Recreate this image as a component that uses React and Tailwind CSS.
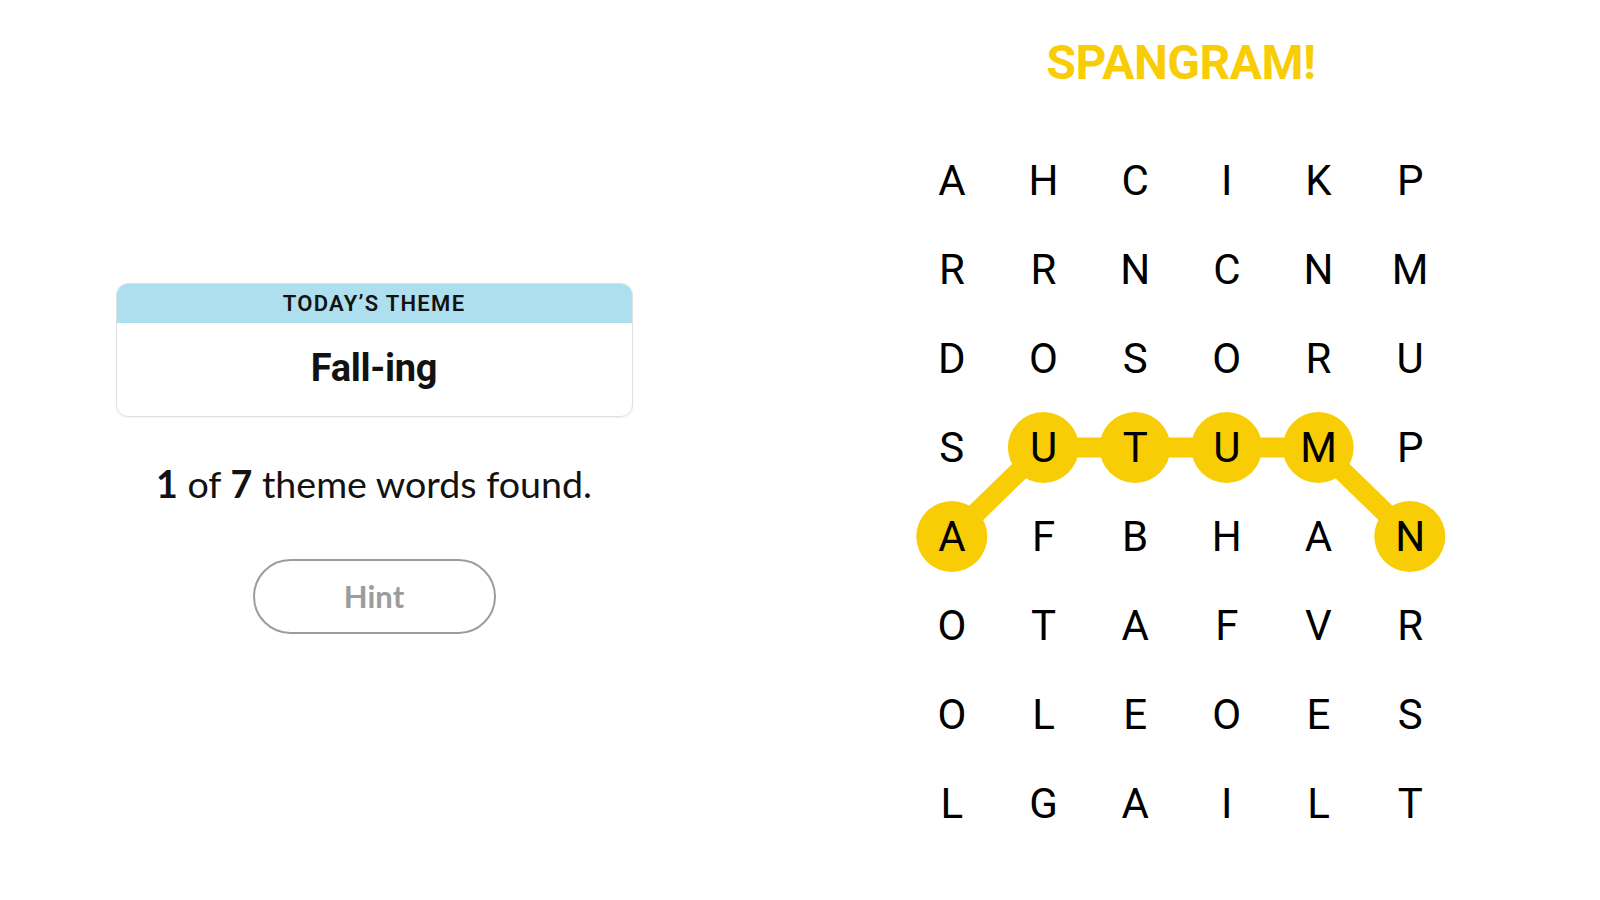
import React from "react";

const ROWS = [
  "AHCIKP",
  "RRNCNM",
  "DOSORU",
  "SUTUMP",
  "AFBHAN",
  "OTAFVR",
  "OLEOES",
  "LGAILT",
];

const CW = 91.6;
const CH = 89;
const PATH = [
  [4, 0],
  [3, 1],
  [3, 2],
  [3, 3],
  [3, 4],
  [4, 5],
];
const YELLOW = "#f8cd05";

function Board() {
  const pts = PATH.map(([r, c]) => [c * CW + CW / 2, r * CH + CH / 2]);
  return (
    <div className="relative w-[550px] h-[712px]">
      <svg
        className="absolute inset-0"
        width="550"
        height="712"
        viewBox="0 0 550 712"
      >
        <polyline
          points={pts.map((p) => p.join(",")).join(" ")}
          fill="none"
          stroke={YELLOW}
          strokeWidth="20"
          strokeLinejoin="round"
          strokeLinecap="round"
        />
        {pts.map(([x, y], i) => (
          <circle key={i} cx={x} cy={y} r="35.5" fill={YELLOW} />
        ))}
      </svg>
      <div className="relative grid grid-cols-6 grid-rows-8 w-full h-full">
        {ROWS.flatMap((row, r) =>
          row.split("").map((ch, c) => (
            <div
              key={r + "-" + c}
              className="flex items-center justify-center text-[42px] leading-none text-black font-['Roboto',sans-serif]"
            >
              {ch}
            </div>
          ))
        )}
      </div>
    </div>
  );
}

export default function App() {
  return (
    <div className="w-[1600px] h-[900px] bg-white flex overflow-hidden">
      <div className="w-[748px] flex flex-col items-center pt-[283px]">
        <div className="w-[517px] h-[134px] rounded-[12px] border border-[#e0e0e0] overflow-hidden flex flex-col shadow-[0_1px_2px_rgba(0,0,0,0.06)]">
          <div className="h-[39px] bg-[#aedfee] flex items-center justify-center">
            <span className="text-[22px] leading-none font-semibold tracking-[1.3px] text-[#121212] font-['Roboto',sans-serif]">
              TODAY’S THEME
            </span>
          </div>
          <div className="flex-1 flex items-center justify-center pb-[4px]">
            <span className="text-[38px] leading-none font-bold text-[#121212] font-['Roboto',sans-serif] tracking-[-0.3px]">
              Fall-ing
            </span>
          </div>
        </div>
        <p className="mt-[48px] text-[37.6px] leading-none text-[#121212] font-['Lato',sans-serif]">
          <span className="font-bold">1</span> of{" "}
          <span className="font-bold">7</span> theme words found.
        </p>
        <button className="mt-[56px] w-[243px] h-[75px] rounded-full border-[2.5px] border-[#9c9c9c] flex items-center justify-center bg-white">
          <span className="text-[31px] leading-none font-bold text-[#9c9c9c] font-['Lato',sans-serif]">
            Hint
          </span>
        </button>
      </div>
      <div className="ml-[158px] w-[550px] flex flex-col items-center pt-[39px]">
        <div className="text-[48px] leading-none font-bold text-[#f8cd05] font-['Roboto',sans-serif] tracking-[-0.5px]">
          SPANGRAM!
        </div>
        <div className="mt-[49px]">
          <Board />
        </div>
      </div>
    </div>
  );
}
